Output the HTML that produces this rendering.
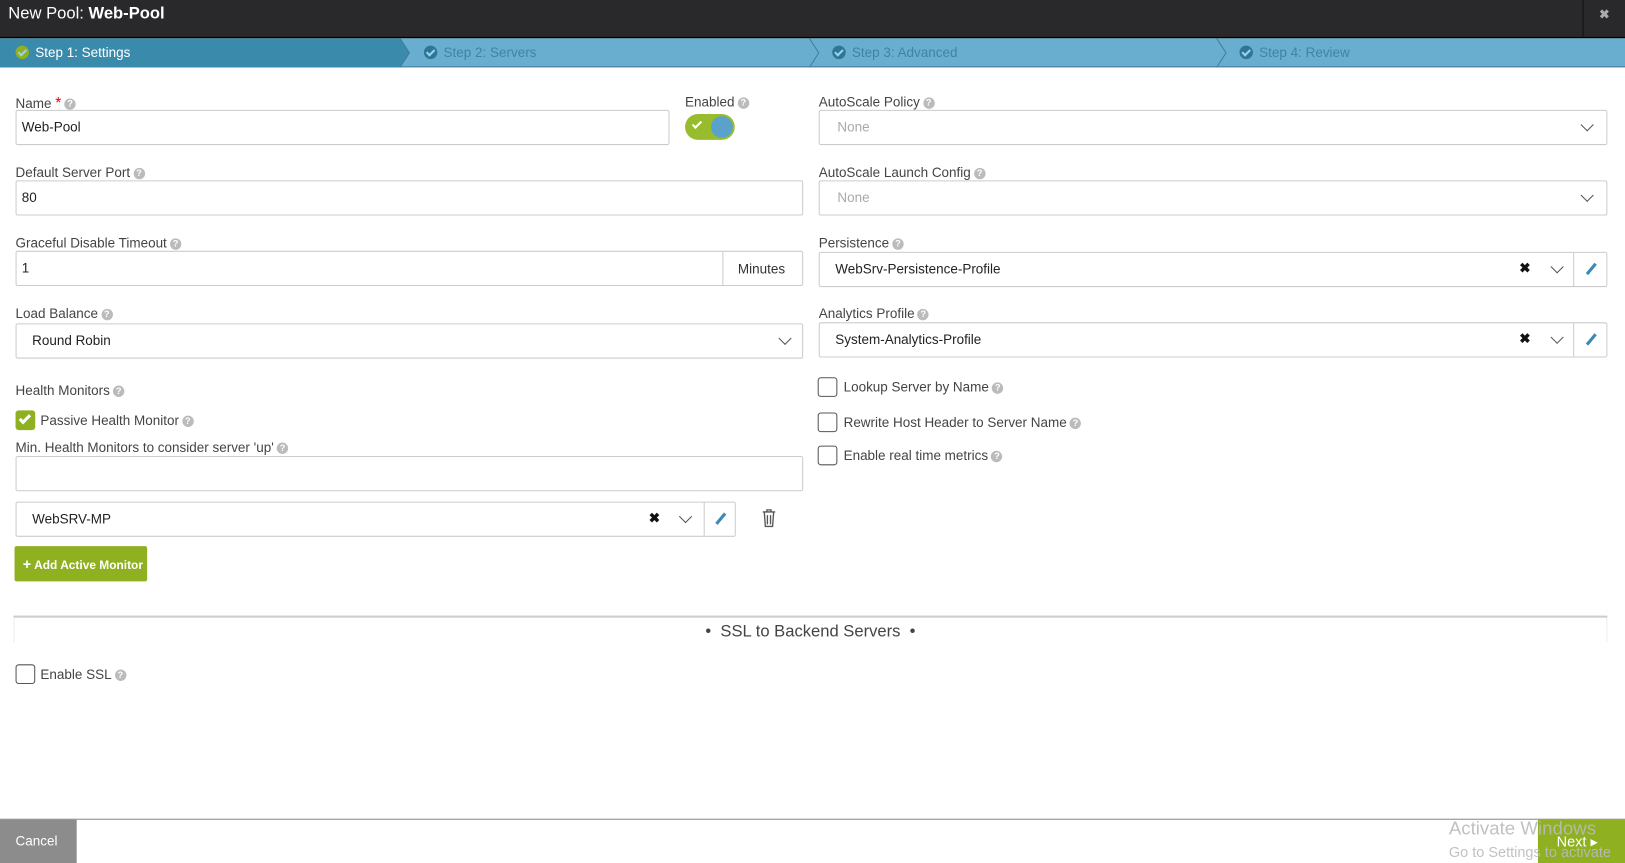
<!DOCTYPE html>
<html><head><meta charset="utf-8"><style>
*{box-sizing:border-box;margin:0;padding:0}
html,body{width:1625px;height:863px;overflow:hidden;background:#fff}
#w{width:1568px;height:833px;transform:scale(1.03635);transform-origin:0 0;position:relative;font-family:"Liberation Sans",sans-serif;font-size:13px;color:#333}
.a{position:absolute}
.lbl{position:absolute;font-size:13px;color:#444}
.q{display:inline-block;width:11px;height:11px;border-radius:50%;background:#bbb;color:#fff;font-size:9px;line-height:11px;text-align:center;font-weight:bold;vertical-align:1px;margin-left:3px}
.in{position:absolute;border:1px solid #ccc;border-radius:2px;background:#fff;height:34px;line-height:32px;padding-left:5px;font-size:13px;color:#222}
.chev{position:absolute;width:9px;height:9px;border-right:1.3px solid #555;border-bottom:1.3px solid #555;transform:rotate(45deg)}
.cb{position:absolute;width:19px;height:19px;border:1.5px solid #555;border-radius:3px;background:#fff}
.step{position:absolute;top:43px;font-size:13px;color:#3d84a6}
.sc{display:inline-block;width:13px;height:13px;border-radius:50%;background:#2f7696;vertical-align:-2px;margin-right:6px;position:relative}
.sc:after{content:"";position:absolute;left:4px;top:2px;width:3px;height:6px;border-right:2px solid #9fd0e8;border-bottom:2px solid #9fd0e8;transform:rotate(45deg)}
.x{position:absolute;font-weight:bold;font-size:13px;color:#111}
.pen{position:absolute;width:3px;height:13px;background:#3a89b8;transform:rotate(40deg)}
</style></head><body><div id="w">
<div class="a" style="left:0;top:0;width:1568px;height:35px;background:#29282b"></div>
<div class="a" style="left:8px;top:5px;color:#fff;font-size:16px">New Pool: <b>Web-Pool</b></div>
<div class="a" style="left:1527px;top:0;width:1px;height:35px;background:#111"></div>
<div class="a" style="left:1543px;top:7px;color:#aaa;font-weight:bold;font-size:12px">✖</div>
<div class="a" style="left:0;top:35px;width:1568px;height:2px;background:#000"></div>
<div class="a" style="left:0;top:37px;width:1568px;height:28px;background:#6aaecf;border-bottom:1px solid #3f7d99"></div>
<svg class="a" style="left:0;top:37px" width="1568" height="28">
<polygon points="0,0 386,0 395,14 386,28 0,28" fill="#3a8aab"/>
<polyline points="386,0 395,14 386,28" fill="none" stroke="#3f7d99"/>
<polyline points="781,0 790,14 781,28" fill="none" stroke="#3f7d99"/>
<polyline points="1174,0 1183,14 1174,28" fill="none" stroke="#3f7d99"/>
</svg>
<div class="step" style="left:15px;color:#fff"><span class="sc" style="background:#8fb021"></span>Step 1: Settings</div>
<div class="step" style="left:409px"><span class="sc"></span>Step 2: Servers</div>
<div class="step" style="left:803px"><span class="sc"></span>Step 3: Advanced</div>
<div class="step" style="left:1196px"><span class="sc"></span>Step 4: Review</div>

<div class="lbl" style="left:15px;top:91px">Name <span style="color:#e00;font-size:15px">*</span><span class="q">?</span></div>
<div class="in" style="left:15px;top:106px;width:631px">Web-Pool</div>
<div class="lbl" style="left:661px;top:91px">Enabled<span class="q">?</span></div>
<div class="a" style="left:661px;top:110px;width:48px;height:25px;border-radius:13px;background:#97bd2e"></div>
<div class="a" style="left:686px;top:112px;width:21px;height:21px;border-radius:50%;background:#5aa2cc"></div>
<div class="a" style="left:670px;top:115px;width:5px;height:9px;border-right:2.5px solid #fff;border-bottom:2.5px solid #fff;transform:rotate(45deg)"></div>

<div class="lbl" style="left:15px;top:159px">Default Server Port<span class="q">?</span></div>
<div class="in" style="left:15px;top:174px;width:760px">80</div>
<div class="lbl" style="left:15px;top:227px">Graceful Disable Timeout<span class="q">?</span></div>
<div class="in" style="left:15px;top:242px;width:760px">1</div>
<div class="a" style="left:697px;top:243px;width:1px;height:32px;background:#ccc"></div>
<div class="a" style="left:712px;top:252px;color:#333">Minutes</div>
<div class="lbl" style="left:15px;top:295px">Load Balance<span class="q">?</span></div>
<div class="in" style="left:15px;top:312px;width:760px;padding-left:15px">Round Robin</div>
<div class="chev" style="left:753px;top:322px"></div>

<div class="lbl" style="left:15px;top:369px">Health Monitors<span class="q">?</span></div>
<div class="a" style="left:15px;top:396px;width:19px;height:19px;border-radius:3px;background:#8fb021"></div>
<div class="a" style="left:21px;top:398px;width:6px;height:11px;border-right:3px solid #fff;border-bottom:3px solid #fff;transform:rotate(45deg)"></div>
<div class="lbl" style="left:39px;top:398px">Passive Health Monitor<span class="q">?</span></div>
<div class="lbl" style="left:15px;top:424px">Min. Health Monitors to consider server 'up'<span class="q">?</span></div>
<div class="in" style="left:15px;top:440px;width:760px"></div>
<div class="in" style="left:15px;top:484px;width:695px;padding-left:15px">WebSRV-MP</div>
<div class="x" style="left:626px;top:492px">✖</div>
<div class="chev" style="left:657px;top:494px"></div>
<div class="a" style="left:679px;top:485px;width:1px;height:32px;background:#ccc"></div>
<div class="pen" style="left:694px;top:494px"></div>
<svg class="a" style="left:735px;top:491px" width="14" height="18"><path d="M1 3h12M5 3V1h4v2M2.5 3l1 14h7l1-14M5.5 6v9M8.5 6v9" fill="none" stroke="#555" stroke-width="1.3"/></svg>
<div class="a" style="left:14px;top:527px;width:128px;height:34px;background:#8fb021;border-radius:2px;color:#fff;font-size:11.5px;line-height:34px;padding-left:8px;font-weight:bold"><span style="font-size:14px">+</span> Add Active Monitor</div>

<div class="lbl" style="left:790px;top:91px">AutoScale Policy<span class="q">?</span></div>
<div class="in" style="left:790px;top:106px;width:761px;color:#aaa;padding-left:17px">None</div>
<div class="chev" style="left:1527px;top:116px"></div>
<div class="lbl" style="left:790px;top:159px">AutoScale Launch Config<span class="q">?</span></div>
<div class="in" style="left:790px;top:174px;width:761px;color:#aaa;padding-left:17px">None</div>
<div class="chev" style="left:1527px;top:184px"></div>
<div class="lbl" style="left:790px;top:227px">Persistence<span class="q">?</span></div>
<div class="in" style="left:790px;top:243px;width:761px;padding-left:15px">WebSrv-Persistence-Profile</div>
<div class="x" style="left:1466px;top:251px">✖</div>
<div class="chev" style="left:1498px;top:253px"></div>
<div class="a" style="left:1518px;top:244px;width:1px;height:32px;background:#ccc"></div>
<div class="pen" style="left:1534px;top:253px"></div>
<div class="lbl" style="left:790px;top:295px">Analytics Profile<span class="q">?</span></div>
<div class="in" style="left:790px;top:311px;width:761px;padding-left:15px">System-Analytics-Profile</div>
<div class="x" style="left:1466px;top:319px">✖</div>
<div class="chev" style="left:1498px;top:321px"></div>
<div class="a" style="left:1518px;top:312px;width:1px;height:32px;background:#ccc"></div>
<div class="pen" style="left:1534px;top:321px"></div>
<div class="cb" style="left:789px;top:364px"></div><div class="lbl" style="left:814px;top:366px">Lookup Server by Name<span class="q">?</span></div>
<div class="cb" style="left:789px;top:398px"></div><div class="lbl" style="left:814px;top:400px">Rewrite Host Header to Server Name<span class="q">?</span></div>
<div class="cb" style="left:789px;top:430px"></div><div class="lbl" style="left:814px;top:432px">Enable real time metrics<span class="q">?</span></div>

<div class="a" style="left:13px;top:594px;width:1538px;height:2px;background:#ccc"></div>
<div class="a" style="left:13px;top:596px;width:1px;height:24px;background:#eee"></div>
<div class="a" style="left:1550px;top:596px;width:1px;height:24px;background:#eee"></div>
<div class="a" style="left:0;top:601px;width:1564px;text-align:center;font-size:16px;color:#444">•&nbsp; SSL to Backend Servers &nbsp;•</div>
<div class="cb" style="left:15px;top:641px"></div><div class="lbl" style="left:39px;top:643px">Enable SSL<span class="q">?</span></div>

<div class="a" style="left:0;top:790px;width:1568px;height:1px;background:#888"></div>
<div class="a" style="left:0;top:791px;width:74px;height:42px;background:#8c8c8c;color:#fff;line-height:42px;padding-left:15px">Cancel</div>
<div class="a" style="left:1484px;top:791px;width:84px;height:42px;background:#8fb021"></div>
<div class="a" style="left:1398px;top:789px;font-size:18px;color:#bbb;opacity:.9">Activate Windows</div>
<div class="a" style="left:1502px;top:804px;color:#fff;font-size:14px">Next ▸</div>
<div class="a" style="left:1398px;top:814px;font-size:14px;color:#bbb;opacity:.9">Go to Settings to activate</div>
</div></body></html>
